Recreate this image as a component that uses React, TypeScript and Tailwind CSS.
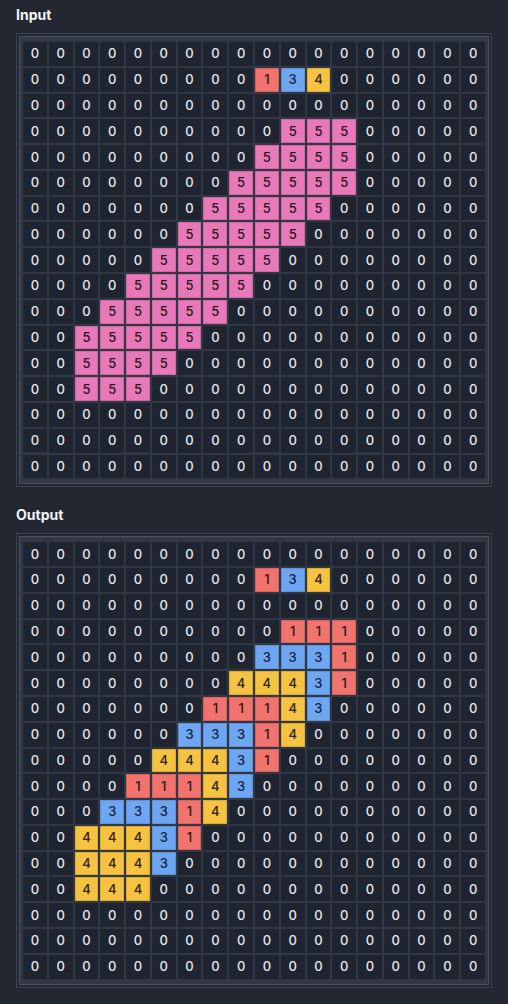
import React from "react";

type Grid = number[][];

const inputRows = [
  "000000000000000000",
  "000000000134000000",
  "000000000000000000",
  "000000000055500000",
  "000000000555500000",
  "000000005555500000",
  "000000055555000000",
  "000000555550000000",
  "000005555500000000",
  "000055555000000000",
  "000555550000000000",
  "005555500000000000",
  "005555000000000000",
  "005550000000000000",
  "000000000000000000",
  "000000000000000000",
  "000000000000000000",
];

const outputRows = [
  "000000000000000000",
  "000000000134000000",
  "000000000000000000",
  "000000000011100000",
  "000000000333100000",
  "000000004443100000",
  "000000011143000000",
  "000000333140000000",
  "000004443100000000",
  "000011143000000000",
  "000333140000000000",
  "004443100000000000",
  "004443000000000000",
  "004440000000000000",
  "000000000000000000",
  "000000000000000000",
  "000000000000000000",
];

const parse = (rows: string[]): Grid => rows.map((r) => r.split("").map(Number));

const cellStyles: Record<number, string> = {
  0: "bg-[#1e2430] text-[#e5e7eb]",
  1: "bg-[#f0736e] text-[#2a1616] border border-[#d9605c]",
  3: "bg-[#6ea6f2] text-[#13233d] border border-[#5b90db]",
  4: "bg-[#f5c341] text-[#2b2210] border border-[#dcab2e]",
  5: "bg-[#e879b9] text-[#2b1322] border border-[#d066a4]",
};

function Board({ grid }: { grid: Grid }) {
  return (
    <div className="border border-[#3b4250] p-[2px]">
      <div className="border border-[#4a5261] bg-[#313844] px-[3px] py-[5px]">
        <div className="grid grid-cols-18 gap-[2px]">
          {grid.flat().map((v, i) => (
            <div
              key={i}
              className={`aspect-square flex items-center justify-center text-[13px] font-medium leading-none ${cellStyles[v]}`}
            >
              {v}
            </div>
          ))}
        </div>
      </div>
    </div>
  );
}

export default function App() {
  return (
    <div className="min-h-screen w-[508px] bg-[#222732] px-4 pt-[5px] font-['Inter','Liberation_Sans',sans-serif]">
      <div>
        <div className="mb-2 text-[14px] font-bold leading-5 text-[#f3f4f6]">Input</div>
        <Board grid={parse(inputRows)} />
      </div>
      <div className="mt-[18px]">
        <div className="mb-2 text-[14px] font-bold leading-5 text-[#f3f4f6]">Output</div>
        <Board grid={parse(outputRows)} />
      </div>
    </div>
  );
}
